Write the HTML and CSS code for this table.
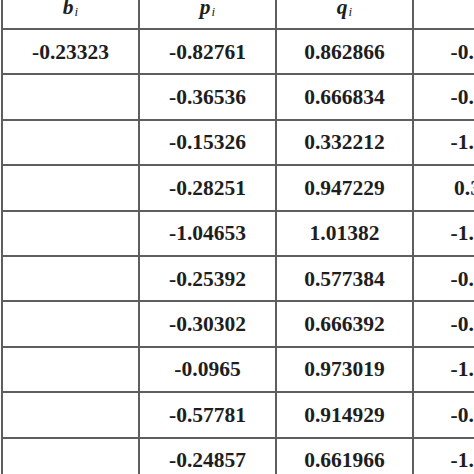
FILE: index.html
```html
<!DOCTYPE html>
<html>
<head>
<meta charset="utf-8">
<link rel="stylesheet" href="styles.css">
</head>
<body>
<table class="data">
  <colgroup>
    <col class="c-std">
    <col class="c-std">
    <col class="c-std">
    <col class="c-wide">
    <col class="c-std">
  </colgroup>
  <thead>
    <tr>
      <th><i>b</i><sub>i</sub></th>
      <th><i>p</i><sub>i</sub></th>
      <th><i>q</i><sub>i</sub></th>
      <th></th>
      <th></th>
    </tr>
  </thead>
  <tbody>
    <tr><td>-0.23323</td><td>-0.82761</td><td>0.862866</td><td>-0.51874</td><td></td></tr>
    <tr><td></td><td>-0.36536</td><td>0.666834</td><td>-0.72105</td><td></td></tr>
    <tr><td></td><td>-0.15326</td><td>0.332212</td><td>-1.20436</td><td></td></tr>
    <tr><td></td><td>-0.28251</td><td>0.947229</td><td>0.31582</td><td></td></tr>
    <tr><td></td><td>-1.04653</td><td>1.01382</td><td>-1.13647</td><td></td></tr>
    <tr><td></td><td>-0.25392</td><td>0.577384</td><td>-0.64219</td><td></td></tr>
    <tr><td></td><td>-0.30302</td><td>0.666392</td><td>-0.83751</td><td></td></tr>
    <tr><td></td><td>-0.0965</td><td>0.973019</td><td>-1.05328</td><td></td></tr>
    <tr><td></td><td>-0.57781</td><td>0.914929</td><td>-0.92406</td><td></td></tr>
    <tr><td></td><td>-0.24857</td><td>0.661966</td><td>-1.17593</td><td></td></tr>
  </tbody>
</table>
</body>
</html>
```

FILE: styles.css
```css
html, body {
  margin: 0;
  padding: 0;
  background: #ffffff;
  overflow: hidden;
  width: 474px;
  height: 474px;
}

.data {
  border-collapse: collapse;
  table-layout: fixed;
  width: 701px;
  font-family: "Liberation Serif", "Times New Roman", serif;
  font-weight: bold;
  font-size: 21.5px;
  color: #1e1e1e;
  margin-left: 1px;
}

.c-std {
  width: 137px;
}

.c-wide {
  width: 152px;
}

.data th,
.data td {
  border: 2px solid #5e5e5e;
  text-align: center;
  padding: 0;
}

.data thead th {
  border-top: none;
  height: 28px;
  line-height: 14px;
  vertical-align: top;
  font-weight: bold;
}

.data th i {
  font-style: italic;
  font-weight: bold;
}

.data th sub {
  font-size: 13px;
  font-style: italic;
  font-weight: normal;
  vertical-align: -2px;
  margin-left: 1px;
}

.data tbody td {
  height: 43.4px;
  line-height: 24px;
  vertical-align: middle;
}
```
